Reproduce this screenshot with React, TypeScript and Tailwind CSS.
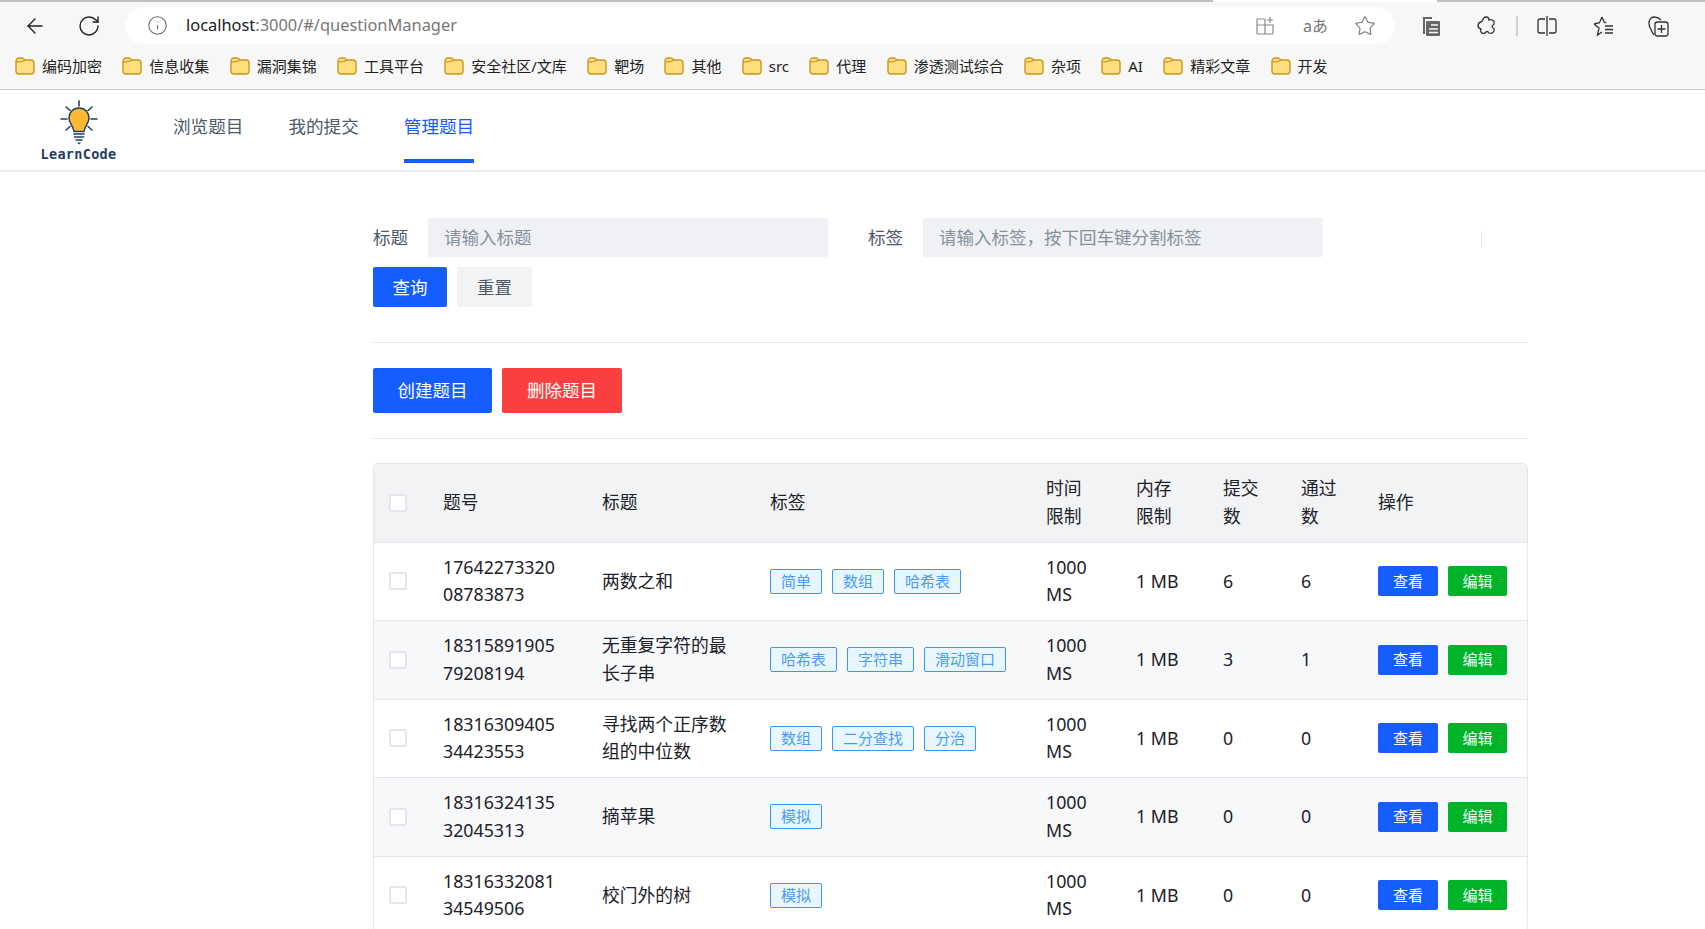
import { ArrowLeft, RotateCw, Info, Star } from 'lucide-react';

const bookmarks = ['编码加密', '信息收集', '漏洞集锦', '工具平台', '安全社区/文库', '靶场', '其他', 'src', '代理', '渗透测试综合', '杂项', 'AI', '精彩文章', '开发'];

const rows = [
  { id: '1764227332008783873', title: '两数之和', tags: ['简单', '数组', '哈希表'], submit: 6, pass: 6 },
  { id: '1831589190579208194', title: '无重复字符的最长子串', tags: ['哈希表', '字符串', '滑动窗口'], submit: 3, pass: 1 },
  { id: '1831630940534423553', title: '寻找两个正序数组的中位数', tags: ['数组', '二分查找', '分治'], submit: 0, pass: 0 },
  { id: '1831632413532045313', title: '摘苹果', tags: ['模拟'], submit: 0, pass: 0 },
  { id: '1831633208134549506', title: '校门外的树', tags: ['模拟'], submit: 0, pass: 0 },
];

function Folder() {
  return (
    <svg width="20" height="18" viewBox="0 0 20 18" className="shrink-0">
      <path d="M1 4a3 3 0 0 1 3-3h3c1.500 0 2 1 3 2h6a3 3 0 0 1 3 3v8a3 3 0 0 1-3 3H4a3 3 0 0 1-3-3z" fill="#ffdf80" stroke="#c9971f" strokeWidth="1.4" />
      <path d="M1 5c2 0 6 0 9-2" fill="none" stroke="#c9971f" strokeWidth="1.2" />
    </svg>
  );
}

function Logo() {
  return (
    <svg width="40" height="46" viewBox="0 0 40 46" className="block">
      <g stroke="#1f4060" strokeWidth="1.6" strokeLinecap="round">
        <path d="M20 1v5M7 7l4 3.500M33 7l-4 3.500M2 19h6M32 19h6M7 30l4-3.500M33 30l-4-3.500" />
      </g>
      <path d="M20 8c-6 0-10 4.500-10 10 0 5 4 7.500 5 13.500h10c1-6 5-8.500 5-13.500 0-5.500-4-10-10-10z" fill="#fdb933" stroke="#1f4060" strokeWidth="1.5" />
      <g stroke="#1f4060" strokeWidth="1.6" strokeLinecap="round">
        <path d="M15 34h10M15.500 37h9M17 40h6" />
      </g>
      <path d="M18 42.500h4l-2 2z" fill="#1f4060" />
    </svg>
  );
}

function Tag({ text }: { text: string }) {
  return (
    <span className="flex h-[25px] items-center rounded-[2px] border border-[#3c96f5] bg-[#e8f7ff] px-[10px] text-[15px] whitespace-nowrap text-[#4a9bf6]">
      {text}
    </span>
  );
}

function Checkbox() {
  return <span className="block h-[18px] w-[18px] rounded-[2px] border-2 border-[#e5e6eb] bg-white" />;
}

export default function App() {
  return (
    <div className="h-[929px] overflow-hidden bg-white font-['Noto_Sans','Noto_Sans_CJK_SC',sans-serif] text-[#1d2129]">
      {/* browser chrome */}
      <div className="h-[90px] border-b border-[#c8c8c8] bg-[#f7f7f7]">
        <div className="flex h-[2px]">
          <div className="w-[1213px] bg-[#c0c0c0]" />
          <div className="w-[224px] bg-white" />
          <div className="flex-1 bg-[#c0c0c0]" />
        </div>
        <div className="mt-[5px] flex h-[37px] items-center overflow-hidden">
          <ArrowLeft className="ml-[23px] h-[24px] w-[24px] shrink-0 text-[#222]" strokeWidth={1.4} />
          <RotateCw className="ml-[30px] h-[24px] w-[24px] shrink-0 text-[#222]" strokeWidth={1.4} />
          <div className="ml-[24px] flex h-[37px] w-[1270px] shrink-0 items-center rounded-full bg-white">
            <Info className="ml-[22px] h-[21px] w-[21px] text-[#666]" strokeWidth={1.2} />
            <span className="ml-[18px] text-[16.400px] text-[#777]">
              <span className="text-[#1a1a1a]">localhost</span>:3000/#/questionManager
            </span>
            <div className="ml-auto flex items-center">
              <svg width="20" height="20" viewBox="0 0 20 20" fill="none" stroke="#8a8a8a" strokeWidth="1.2">
                <path d="M10 3H3a1 1 0 0 0-1 1v13a1 1 0 0 0 1 1h14a1 1 0 0 0 1-1V9H2M10 3v15M15 1v6M12 4h6" />
              </svg>
              <span className="ml-[28px] w-[24px] text-[16px] leading-none whitespace-nowrap text-[#777]">aあ</span>
              <Star className="ml-[27px] h-[22px] w-[22px] text-[#777]" strokeWidth={1.2} />
              <div className="w-[19px]" />
            </div>
          </div>
          <svg className="ml-[25px] shrink-0" width="22" height="22" viewBox="0 0 22 22">
            <path d="M3 2h9v2H5v15H3z" fill="#666" />
            <rect x="6" y="6" width="14" height="15" rx="1" fill="#666" />
            <path d="M11 10h7M9 14h9M9 17.500h9" stroke="#f7f7f7" strokeWidth="1.4" />
          </svg>
          <svg className="ml-[33px] shrink-0" width="22" height="22" viewBox="0 0 22 22" fill="none" stroke="#333" strokeWidth="1.3">
            <path d="M8 5c0-4 6-4 6 0 3-1 6 1 5 4 0 1-2 1-2 2.500s2 1.500 2 2.500c1 3-2 5-5 4-1-1.500-2-2-3-1-1 2-4 2-5 0s0-2 0-3c-4-1-4-6 0-7 1-.5 1-1 2-2.500z" />
          </svg>
          <div className="ml-[19px] h-[20px] w-[2px] shrink-0 bg-[#d0d0d0]" />
          <svg className="ml-[19px] shrink-0" width="20" height="22" viewBox="0 0 20 22" fill="none" stroke="#333" strokeWidth="1.3">
            <path d="M8 4H3a2 2 0 0 0-2 2v10a2 2 0 0 0 2 2h5M12 4h5a2 2 0 0 1 2 2v10a2 2 0 0 1-2 2h-5M10 1v20" />
          </svg>
          <svg className="ml-[36px] shrink-0" width="21" height="22" viewBox="0 0 21 22" fill="none" stroke="#333" strokeWidth="1.3">
            <path d="M9 2l2.300 5.500 2 .2M1 9l5 4-1.500 7 4.500-3M1 9l5.500-1.300L9 2M12 11h8M12 14.500h8M12 18h8" />
          </svg>
          <svg className="ml-[33px] shrink-0" width="22" height="22" viewBox="0 0 22 22" fill="none" stroke="#333" strokeWidth="1.3">
            <path d="M7 20c-2-3-5-8-5-12 0-3 2-6 5-6 2 0 5 1 7 3" />
            <rect x="8" y="7" width="13" height="14" rx="2.500" />
            <path d="M14.500 10v8M10.500 14h8" />
          </svg>
          <svg className="ml-[33px] shrink-0" width="16" height="22" viewBox="0 0 16 22" fill="none" stroke="#333" strokeWidth="1.3">
            <circle cx="8" cy="8" r="4" />
          </svg>
        </div>
        <div className="mt-[9px] flex h-[26px] items-center gap-[20.300px] pl-[15px] text-[15px] text-[#222]">
          {bookmarks.map((b) => (
            <div key={b} className="flex shrink-0 items-center gap-[7px]">
              <Folder />
              <span className="whitespace-nowrap">{b}</span>
            </div>
          ))}
        </div>
      </div>

      {/* site nav */}
      <div className="flex h-[82px] items-stretch border-b-2 border-[#eeeeee]">
        <div className="ml-[40px] flex w-[77px] flex-col items-center pt-[10px]">
          <Logo />
          <span className="mt-[1px] font-['DejaVu_Sans_Mono',monospace] text-[13.500px] leading-[14px] font-bold tracking-[0.3px] whitespace-nowrap text-[#1f4060]">LearnCode</span>
        </div>
        <div className="ml-[56px] flex gap-[45px] text-[17.600px] text-[#4e5969]">
          <span className="h-[73px] pt-[23px]">浏览题目</span>
          <span className="h-[73px] pt-[23px]">我的提交</span>
          <span className="h-[73px] border-b-4 border-[#165dff] pt-[23px] text-[#165dff]">管理题目</span>
        </div>
      </div>

      {/* page */}
      <div className="ml-[373px] w-[1155px] pt-[46px] text-[17.500px]">
        <div className="flex h-[39px] items-center">
          <span className="w-[36px] shrink-0 text-[#4e5969]">标题</span>
          <div className="ml-[19px] flex h-[39px] w-[400px] items-center rounded-[2px] bg-[#f0f1f4] px-[16px] text-[#86909c]">请输入标题</div>
          <span className="ml-[40px] w-[36px] shrink-0 text-[#4e5969]">标签</span>
          <div className="ml-[19px] flex h-[39px] w-[400px] items-center rounded-[2px] bg-[#f0f1f4] px-[16px] text-[#86909c]">请输入标签，按下回车键分割标签</div>
          <div className="mt-[3px] ml-[158px] h-[17px] w-px bg-[#e5e6eb]" />
        </div>
        <div className="mt-[10px] flex gap-[10px]">
          <button className="h-[40px] w-[74px] rounded-[2px] bg-[#165dff] text-white">查询</button>
          <button className="h-[40px] w-[75px] rounded-[2px] bg-[#f2f3f5] text-[#4e5969]">重置</button>
        </div>
        <div className="mt-[35px] h-px bg-[#e5e6eb]" />
        <div className="mt-[25px] flex gap-[10px]">
          <button className="h-[45px] w-[119px] rounded-[2px] bg-[#165dff] text-white">创建题目</button>
          <button className="h-[45px] w-[120px] rounded-[2px] bg-[#f93f3f] text-white">删除题目</button>
        </div>
        <div className="mt-[25px] h-px bg-[#e5e6eb]" />

        <div className="mt-[24px] overflow-hidden rounded-t-[5px] border border-[#e5e6eb]">
          <table className="w-full table-fixed border-collapse text-left text-[17.800px] leading-[27.500px]">
            <colgroup>
              <col className="w-[49px]" />
              <col className="w-[159px]" />
              <col className="w-[168px]" />
              <col className="w-[276px]" />
              <col className="w-[90px]" />
              <col className="w-[87px]" />
              <col className="w-[78px]" />
              <col className="w-[77px]" />
              <col className="w-[169px]" />
            </colgroup>
            <thead>
              <tr className="h-[78px] border-b border-[#e5e6eb] bg-[#f2f3f5]">
                <th className="pl-[15px] font-normal"><Checkbox /></th>
                <th className="px-[20px] font-normal">题号</th>
                <th className="px-[20px] font-normal">标题</th>
                <th className="px-[20px] font-normal">标签</th>
                <th className="px-[20px] font-normal">时间限制</th>
                <th className="px-[20px] font-normal">内存限制</th>
                <th className="px-[20px] font-normal">提交数</th>
                <th className="px-[20px] font-normal">通过数</th>
                <th className="px-[20px] font-normal">操作</th>
              </tr>
            </thead>
            <tbody>
              {rows.map((r, i) => (
                <tr key={r.id} className={i % 2 === 1 ? 'h-[78.500px] border-b border-[#e5e6eb] bg-[#f7f8fa]' : 'h-[78.500px] border-b border-[#e5e6eb] bg-white'}>
                  <td className="pl-[15px]"><Checkbox /></td>
                  <td className="px-[20px] break-all">{r.id}</td>
                  <td className="px-[20px]">{r.title}</td>
                  <td className="px-[20px]">
                    <div className="flex gap-[10px]">
                      {r.tags.map((t) => <Tag key={t} text={t} />)}
                    </div>
                  </td>
                  <td className="px-[20px]">1000 MS</td>
                  <td className="px-[20px] whitespace-nowrap">1 MB</td>
                  <td className="px-[20px]">{r.submit}</td>
                  <td className="px-[20px]">{r.pass}</td>
                  <td className="px-[20px]">
                    <div className="flex gap-[10px]">
                      <button className="h-[30px] w-[60px] rounded-[2px] bg-[#165dff] text-[15px] text-white">查看</button>
                      <button className="h-[30px] w-[59px] rounded-[2px] bg-[#00b42a] text-[15px] text-white">编辑</button>
                    </div>
                  </td>
                </tr>
              ))}
            </tbody>
          </table>
        </div>
      </div>
    </div>
  );
}
